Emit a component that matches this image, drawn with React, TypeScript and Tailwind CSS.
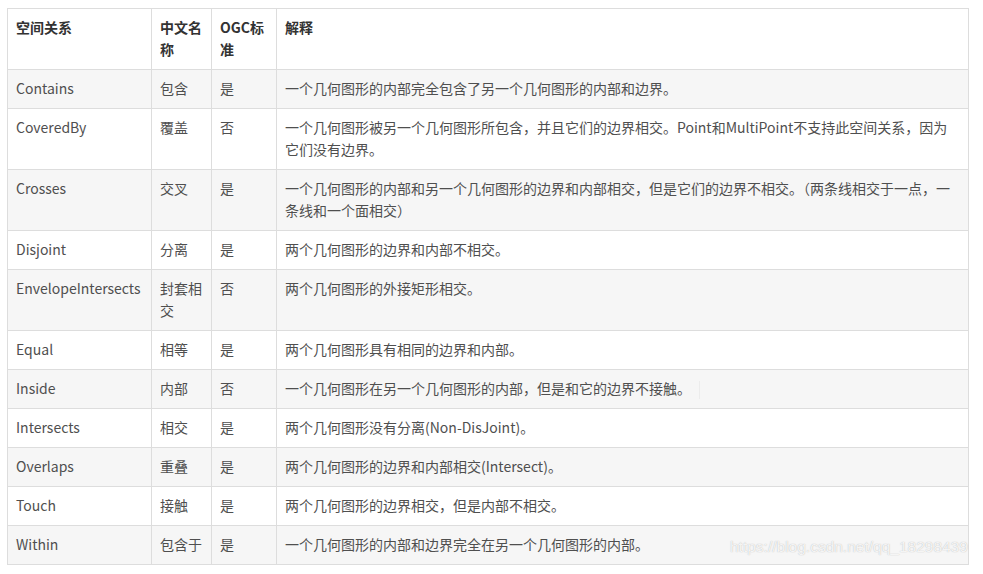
import React from "react";

const rows: [string, string, string, React.ReactNode][] = [
  ["Contains", "包含", "是", "一个几何图形的内部完全包含了另一个几何图形的内部和边界。"],
  ["CoveredBy", "覆盖", "否", "一个几何图形被另一个几何图形所包含，并且它们的边界相交。Point和MultiPoint不支持此空间关系，因为它们没有边界。"],
  ["Crosses", "交叉", "是", "一个几何图形的内部和另一个几何图形的边界和内部相交，但是它们的边界不相交。（两条线相交于一点，一条线和一个面相交）"],
  ["Disjoint", "分离", "是", "两个几何图形的边界和内部不相交。"],
  ["EnvelopeIntersects", "封套相交", "否", "两个几何图形的外接矩形相交。"],
  ["Equal", "相等", "是", "两个几何图形具有相同的边界和内部。"],
  [
    "Inside",
    "内部",
    "否",
    <>
      一个几何图形在另一个几何图形的内部，但是和它的边界不接触。
      <span className="inline-block align-middle ml-[8px] w-px h-[18px] bg-[#ececec]" />
    </>,
  ],
  ["Intersects", "相交", "是", "两个几何图形没有分离(Non-DisJoint)。"],
  ["Overlaps", "重叠", "是", "两个几何图形的边界和内部相交(Intersect)。"],
  ["Touch", "接触", "是", "两个几何图形的边界相交，但是内部不相交。"],
  ["Within", "包含于", "是", "一个几何图形的内部和边界完全在另一个几何图形的内部。"],
];

export default function App() {
  const font = { fontFamily: '"Noto Sans CJK SC", "Noto Sans", sans-serif' };
  return (
    <div className="relative w-[983px] h-[574px] bg-white overflow-hidden" style={font}>
      <div className="pt-[8px] pl-[7px]">
        <table className="table-fixed border-collapse w-[961px] text-[14px] leading-[22px] text-[#4f4f4f]">
          <colgroup>
            <col className="w-[144px]" />
            <col className="w-[60px]" />
            <col className="w-[65px]" />
            <col className="w-[692px]" />
          </colgroup>
          <thead>
            <tr className="bg-white">
              {["空间关系", "中文名称", "OGC标准", "解释"].map((h) => (
                <th
                  key={h}
                  className="border border-[#dddddd] px-[8px] pt-[7px] pb-[9px] text-left align-top font-bold text-[#333333]"
                >
                  {h}
                </th>
              ))}
            </tr>
          </thead>
          <tbody>
            {rows.map((r, i) => (
              <tr key={r[0]} className={i % 2 === 0 ? "bg-[#f6f6f6]" : "bg-white"}>
                <td className="border border-[#dddddd] px-[8px] pt-[7px] pb-[9px] align-top">{r[0]}</td>
                <td className="border border-[#dddddd] px-[8px] pt-[7px] pb-[9px] align-top">{r[1]}</td>
                <td className="border border-[#dddddd] px-[8px] pt-[7px] pb-[9px] align-top">{r[2]}</td>
                <td className="border border-[#dddddd] px-[8px] pt-[7px] pb-[9px] align-top">{r[3]}</td>
              </tr>
            ))}
          </tbody>
        </table>
      </div>
      <div
        className="absolute left-[730px] top-[537px] text-[15.5px] leading-[20px] text-white/85"
        style={{ fontFamily: '"Liberation Sans", Arial, sans-serif', textShadow: "0 0 1px rgba(140,140,140,0.7)" }}
      >
        https://blog.csdn.net/qq_18298439
      </div>
    </div>
  );
}
